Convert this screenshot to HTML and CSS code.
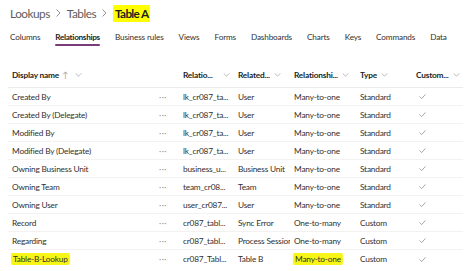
FILE: index.html
```html
<!DOCTYPE html>
<html>
<head>
<meta charset="utf-8">
<link rel="stylesheet" href="styles.css">
</head>
<body>
<div class="page">
  <nav class="crumbs">
    <span class="crumb">Lookups</span>
    <svg class="sep" viewBox="0 0 5 8"><polyline points="0.5,0.5 4,4 0.5,7.5"/></svg>
    <span class="crumb">Tables</span>
    <svg class="sep" viewBox="0 0 5 8"><polyline points="0.5,0.5 4,4 0.5,7.5"/></svg>
    <span class="crumb current"><span class="hl">Table A</span></span>
  </nav>
  <div class="tabs">
    <span class="tab">Columns</span>
    <span class="tab active">Relationships</span>
    <span class="tab">Business rules</span>
    <span class="tab">Views</span>
    <span class="tab">Forms</span>
    <span class="tab">Dashboards</span>
    <span class="tab">Charts</span>
    <span class="tab">Keys</span>
    <span class="tab">Commands</span>
    <span class="tab">Data</span>
  </div>
  <div class="grid">
    <div class="row head">
      <div class="c c1">Display name <span class="sort">&#8593;</span><svg class="chev" viewBox="0 0 8 5"><polyline points="0.5,0.5 4,4 7.5,0.5"/></svg></div>
      <div class="c c2"></div>
      <div class="c c3">Relatio... <svg class="chev far" viewBox="0 0 8 5"><polyline points="0.5,0.5 4,4 7.5,0.5"/></svg></div>
      <div class="c c4">Related... <svg class="chev" viewBox="0 0 8 5"><polyline points="0.5,0.5 4,4 7.5,0.5"/></svg></div>
      <div class="c c5">Relationshi... <svg class="chev" viewBox="0 0 8 5"><polyline points="0.5,0.5 4,4 7.5,0.5"/></svg></div>
      <div class="c c6">Type <svg class="chev" viewBox="0 0 8 5"><polyline points="0.5,0.5 4,4 7.5,0.5"/></svg></div>
      <div class="c c7">Custom... <svg class="chev" viewBox="0 0 8 5"><polyline points="0.5,0.5 4,4 7.5,0.5"/></svg></div>
    </div>
    <div class="row"><div class="c c1">Created By</div><div class="c c2">···</div><div class="c c3">lk_cr087_ta...</div><div class="c c4">User</div><div class="c c5">Many-to-one</div><div class="c c6">Standard</div><div class="c c7"><svg class="check" viewBox="0 0 8 6"><polyline points="0.5,3 3,5.5 7.5,0.5"/></svg></div></div>
    <div class="row"><div class="c c1">Created By (Delegate)</div><div class="c c2">···</div><div class="c c3">lk_cr087_ta...</div><div class="c c4">User</div><div class="c c5">Many-to-one</div><div class="c c6">Standard</div><div class="c c7"><svg class="check" viewBox="0 0 8 6"><polyline points="0.5,3 3,5.5 7.5,0.5"/></svg></div></div>
    <div class="row"><div class="c c1">Modified By</div><div class="c c2">···</div><div class="c c3">lk_cr087_ta...</div><div class="c c4">User</div><div class="c c5">Many-to-one</div><div class="c c6">Standard</div><div class="c c7"><svg class="check" viewBox="0 0 8 6"><polyline points="0.5,3 3,5.5 7.5,0.5"/></svg></div></div>
    <div class="row"><div class="c c1">Modified By (Delegate)</div><div class="c c2">···</div><div class="c c3">lk_cr087_ta...</div><div class="c c4">User</div><div class="c c5">Many-to-one</div><div class="c c6">Standard</div><div class="c c7"><svg class="check" viewBox="0 0 8 6"><polyline points="0.5,3 3,5.5 7.5,0.5"/></svg></div></div>
    <div class="row"><div class="c c1">Owning Business Unit</div><div class="c c2">···</div><div class="c c3">business_u...</div><div class="c c4">Business Unit</div><div class="c c5">Many-to-one</div><div class="c c6">Standard</div><div class="c c7"><svg class="check" viewBox="0 0 8 6"><polyline points="0.5,3 3,5.5 7.5,0.5"/></svg></div></div>
    <div class="row"><div class="c c1">Owning Team</div><div class="c c2">···</div><div class="c c3">team_cr08...</div><div class="c c4">Team</div><div class="c c5">Many-to-one</div><div class="c c6">Standard</div><div class="c c7"><svg class="check" viewBox="0 0 8 6"><polyline points="0.5,3 3,5.5 7.5,0.5"/></svg></div></div>
    <div class="row"><div class="c c1">Owning User</div><div class="c c2">···</div><div class="c c3">user_cr087...</div><div class="c c4">User</div><div class="c c5">Many-to-one</div><div class="c c6">Standard</div><div class="c c7"><svg class="check" viewBox="0 0 8 6"><polyline points="0.5,3 3,5.5 7.5,0.5"/></svg></div></div>
    <div class="row"><div class="c c1">Record</div><div class="c c2">···</div><div class="c c3">cr087_tabl...</div><div class="c c4">Sync Error</div><div class="c c5">One-to-many</div><div class="c c6">Custom</div><div class="c c7"><svg class="check" viewBox="0 0 8 6"><polyline points="0.5,3 3,5.5 7.5,0.5"/></svg></div></div>
    <div class="row"><div class="c c1">Regarding</div><div class="c c2">···</div><div class="c c3">cr087_tabl...</div><div class="c c4">Process Session</div><div class="c c5">One-to-many</div><div class="c c6">Custom</div><div class="c c7"><svg class="check" viewBox="0 0 8 6"><polyline points="0.5,3 3,5.5 7.5,0.5"/></svg></div></div>
    <div class="row last"><div class="c c1"><span class="mark">Table-B-Lookup</span></div><div class="c c2">···</div><div class="c c3">cr087_Tabl...</div><div class="c c4">Table B</div><div class="c c5"><span class="mark">Many-to-one</span></div><div class="c c6">Custom</div><div class="c c7"><svg class="check" viewBox="0 0 8 6"><polyline points="0.5,3 3,5.5 7.5,0.5"/></svg></div></div>
  </div>
</div>
</body>
</html>
```
FILE: styles.css
```css
html, body {
  margin: 0;
  padding: 0;
  background: #ffffff;
}
body {
  font-family: "Lato", "Open Sans", sans-serif;
  color: #323130;
  width: 474px;
  height: 271px;
  overflow: hidden;
}
.page {
  padding: 0 0 0 10px;
}
.crumbs {
  display: flex;
  align-items: center;
  height: 26px;
  font-size: 11.8px;
  letter-spacing: -0.5px;
  color: #605e5c;
  gap: 5px;
}
.sep {
  width: 5px;
  height: 8px;
  margin: 0 1px;
  fill: none;
  stroke: #8a8886;
  stroke-width: 0.9;
}
.current {
  color: #201f1e;
  font-weight: 700;
  letter-spacing: -0.7px;
}
.hl {
  background: #ffff00;
  padding: 1px 2px;
}
.tabs {
  display: flex;
  gap: 15px;
  font-size: 8.2px;
  letter-spacing: -0.15px;
  height: 22px;
  align-items: center;
  white-space: nowrap;
}
.tab {
  position: relative;
  color: #323130;
}
.tab.active {
  font-weight: 700;
  color: #201f1e;
  letter-spacing: -0.3px;
}
.tab.active::after {
  content: "";
  position: absolute;
  left: 0;
  right: 0;
  bottom: -4px;
  height: 2px;
  background: #7a3b7a;
  border-radius: 1px;
}
.grid {
  margin-top: 15px;
  width: 455px;
  margin-left: -2px;
  font-size: 8.3px;
  letter-spacing: -0.2px;
}
.row {
  display: grid;
  grid-template-columns: 145px 26px 55px 56px 66px 56px 51px;
  height: 18px;
  align-items: center;
  border-bottom: 1px solid #f3f2f1;
  box-sizing: border-box;
}
.row.head {
  height: 25px;
  font-weight: 700;
  color: #201f1e;
  border-bottom: 1px solid #edebe9;
}
.row.last {
  border-bottom: none;
}
.c {
  padding-left: 4px;
  white-space: nowrap;
  overflow: hidden;
  display: flex;
  align-items: center;
}
.c2 {
  color: #8a8886;
  letter-spacing: 0.5px;
  padding-left: 6px;
}
.sort {
  font-weight: 400;
  color: #a19f9d;
  margin: 0 3px 0 3px;
}
.chev {
  width: 7px;
  height: 4px;
  margin-left: 4px;
  fill: none;
  stroke: #a19f9d;
  stroke-width: 0.9;
}
.chev.far {
  margin-left: 10px;
}
.check {
  width: 7px;
  height: 5px;
  margin-left: 3px;
  fill: none;
  stroke: #8a8886;
  stroke-width: 0.9;
}
.mark {
  background: #f7f516;
  border-radius: 3px;
  padding: 1px 1px;
  box-shadow: 0 0 1px 1px #f7f516;
}
```
